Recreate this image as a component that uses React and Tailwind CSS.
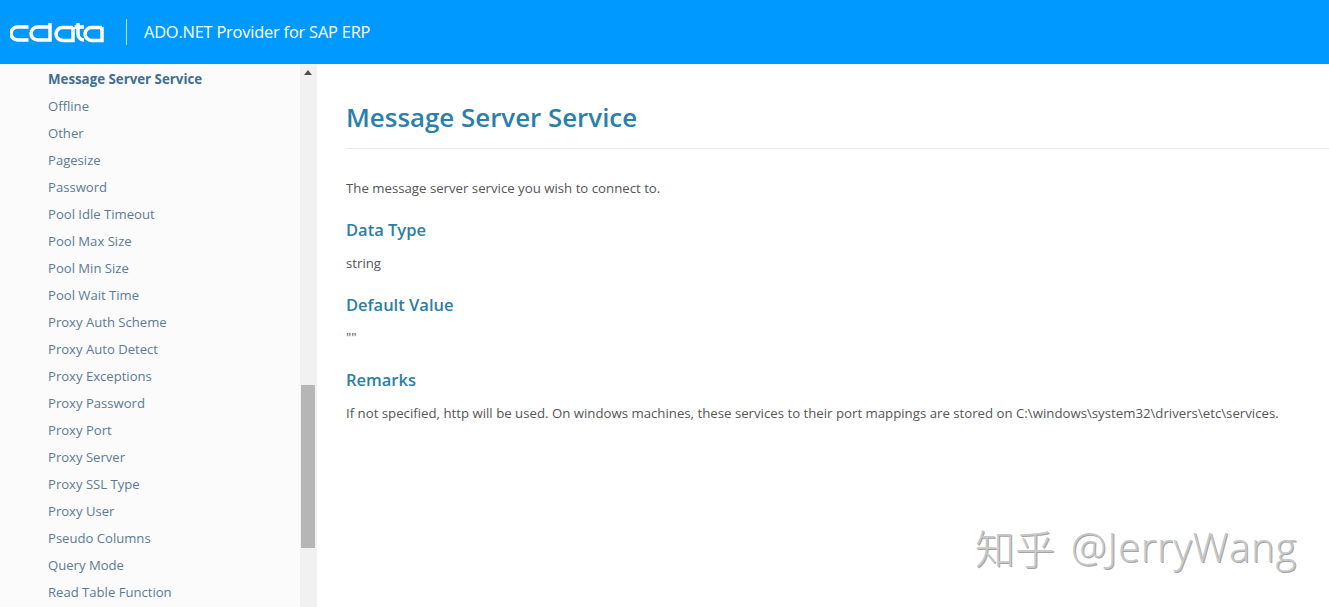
const items = ["Offline","Other","Pagesize","Password","Pool Idle Timeout","Pool Max Size","Pool Min Size","Pool Wait Time","Proxy Auth Scheme","Proxy Auto Detect","Proxy Exceptions","Proxy Password","Proxy Port","Proxy Server","Proxy SSL Type","Proxy User","Pseudo Columns","Query Mode","Read Table Function"];

function Logo() {
  return (
    <svg width="94" height="21" viewBox="0 0 94 21" fill="none" stroke="#fff" strokeWidth="3.5" className="block">
      <path d="M18.500 5H7.500a6.500 6.500 0 0 0 0 13H18.500" />
      <path d="M40 1V18H27.500a6.500 6.500 0 0 1 0-13H40" />
      <path d="M63 5V18.500H52.500a6.500 6.500 0 0 1 0-13H63" />
      <path d="M68 1V12a6 6 0 0 0 6 6M64.500 5H74" />
      <path d="M92 5V18.500H81.500a6.500 6.500 0 0 1 0-13H92" />
    </svg>
  );
}

export default function App() {
  return (
    <div className="relative h-[607px] w-full overflow-hidden bg-white font-['Open_Sans','Noto_Sans',sans-serif]">
      <header className="flex h-16 items-center bg-[#0099ff] pl-[10px] text-white">
        <Logo />
        <div className="ml-[22px] h-[26px] w-px bg-[#b3e0ff]" />
        <div className="ml-[17px] text-[16.400px] tracking-[-0.2px]">ADO.NET Provider for SAP ERP</div>
      </header>
      <div className="flex h-[543px]">
        <aside className="flex h-full w-[317px] shrink-0">
          <nav className="h-full w-[300px] overflow-hidden bg-[#fbfbfb] pl-12 text-[13.100px] leading-[27px] text-[#5b7a94]">
            <div className="mt-[2px] font-bold text-[13.300px] text-[#3f6d94]">Message Server Service</div>
            {items.map((t) => (
              <div key={t}>{t}</div>
            ))}
          </nav>
          <div className="flex h-full w-[17px] flex-col items-center bg-[#f1f1f1] pr-[2px] pl-px">
            <div className="mt-[6px] h-0 w-0 border-x-[4px] border-b-[5px] border-x-transparent border-b-[#505050]" />
            <div className="mt-[310px] h-[163px] w-full bg-[#b6b6b6]" />
          </div>
        </aside>
        <main className="min-w-0 flex-1 pl-[29px] text-[13.230px] text-[#555]">
          <h1 className="border-b border-[#e8e8e8] pt-[34px] pb-[12px] text-[25.900px] leading-[38px] font-semibold text-[#2a80ac]">Message Server Service</h1>
          <p className="mt-[29px] leading-5">The message server service you wish to connect to.</p>
          <h2 className="mt-[18px] text-[16.500px] leading-7 font-semibold text-[#2b7ea8]">Data Type</h2>
          <p className="mt-[9px] leading-5">string</p>
          <h2 className="mt-[18px] text-[16.500px] leading-7 font-semibold text-[#2b7ea8]">Default Value</h2>
          <p className="mt-[8px] leading-5">""</p>
          <h2 className="mt-[19px] text-[16.500px] leading-7 font-semibold text-[#2b7ea8]">Remarks</h2>
          <p className="mt-[9px] leading-5 whitespace-nowrap">If not specified, http will be used. On windows machines, these services to their port mappings are stored on C:\windows\system32\drivers\etc\services.</p>
        </main>
      </div>
      <div className="absolute left-[975px] top-[520px] flex items-center whitespace-nowrap text-[40px] leading-[54px] text-[#c8c8c8] [text-shadow:1px_1px_0_#a4a4a4]">
        <span className="font-['Noto_Sans_CJK_SC',sans-serif] font-light">知乎</span>
        <span className="ml-4 font-['Open_Sans',sans-serif] font-light tracking-[0.8px]">@JerryWang</span>
      </div>
    </div>
  );
}
